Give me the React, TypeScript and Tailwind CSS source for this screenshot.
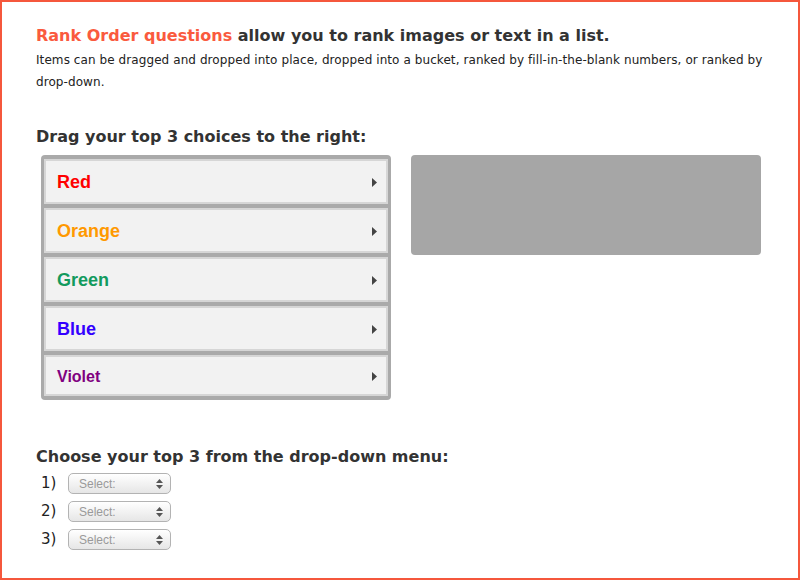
const choices = [
  { label: "Red", color: "text-[#ff0000]", big: true },
  { label: "Orange", color: "text-[#ff9900]", big: true },
  { label: "Green", color: "text-[#129a5e]", big: true },
  { label: "Blue", color: "text-[#3300ff]", big: true },
  { label: "Violet", color: "text-[#800080]", big: false },
];

function UpDown() {
  return (
    <svg width="7" height="10" viewBox="0 0 7 10" aria-hidden>
      <path d="M3.5 0 L7 4 L0 4 Z" fill="#555" />
      <path d="M3.5 10 L7 6 L0 6 Z" fill="#555" />
    </svg>
  );
}

export default function App() {
  return (
    <div className="box-border h-[580px] w-[800px] border-2 border-[#f5573c] bg-white px-[34px] pt-[24px] font-['DejaVu_Sans',Verdana,sans-serif] text-[#333]">
      {/* Intro */}
      <h1 className="text-[16px] font-bold leading-[20px]">
        <span className="text-[#fa5a3e]">Rank Order questions</span> allow you to rank images or text in a list.
      </h1>
      <p className="mt-[3px] text-[12px] leading-[22px] tracking-[0.08px] text-[#222]">
        Items can be dragged and dropped into place, dropped into a bucket, ranked by fill-in-the-blank numbers, or ranked by drop-down.
      </p>

      {/* Drag and drop */}
      <h2 className="mt-[34px] text-[16px] font-bold leading-[20px]">Drag your top 3 choices to the right:</h2>
      <div className="mt-[8px] flex gap-[20px] pl-[5px]">
        <div className="flex w-[350px] flex-col gap-[4px] rounded-[4px] bg-[#aaaaaa] px-[3px] py-[4px]">
          {choices.map((c) => (
            <div
              key={c.label}
              className={`flex items-center justify-between border-2 border-[#d6d6d6] bg-[#f2f2f2] pl-[11px] pr-[9px] pt-[2px] ${c.big ? "h-[45px]" : "h-[41px]"}`}
            >
              <span
                className={`font-['Liberation_Sans',Arial,sans-serif] font-bold ${c.color} ${c.big ? "text-[18px]" : "text-[16px]"}`}
              >
                {c.label}
              </span>
              <svg width="5" height="9" viewBox="0 0 5 9" aria-hidden>
                <path d="M0 0 L5 4.5 L0 9 Z" fill="#444" />
              </svg>
            </div>
          ))}
        </div>
        <div className="h-[100px] w-[350px] rounded-[4px] bg-[#a6a6a6]" />
      </div>

      {/* Drop-down */}
      <h2 className="mt-[47px] text-[16px] font-bold leading-[20px]">Choose your top 3 from the drop-down menu:</h2>
      <div className="mt-[6px] flex flex-col gap-[7px] pl-[5px]">
        {[1, 2, 3].map((n) => (
          <div key={n} className="flex items-center gap-[11px]">
            <span className="w-[16px] text-[15px] leading-[21px] text-[#222]">{n})</span>
            <div className="flex h-[21px] w-[103px] items-center justify-between rounded-[5px] border border-[#b3b3b3] bg-gradient-to-b from-white to-[#e6e6e6] pl-[10px] pr-[7px] font-['Liberation_Sans',Arial,sans-serif] text-[12px] text-[#9a9a9a]">
              <span>Select:</span>
              <UpDown />
            </div>
          </div>
        ))}
      </div>
    </div>
  );
}
